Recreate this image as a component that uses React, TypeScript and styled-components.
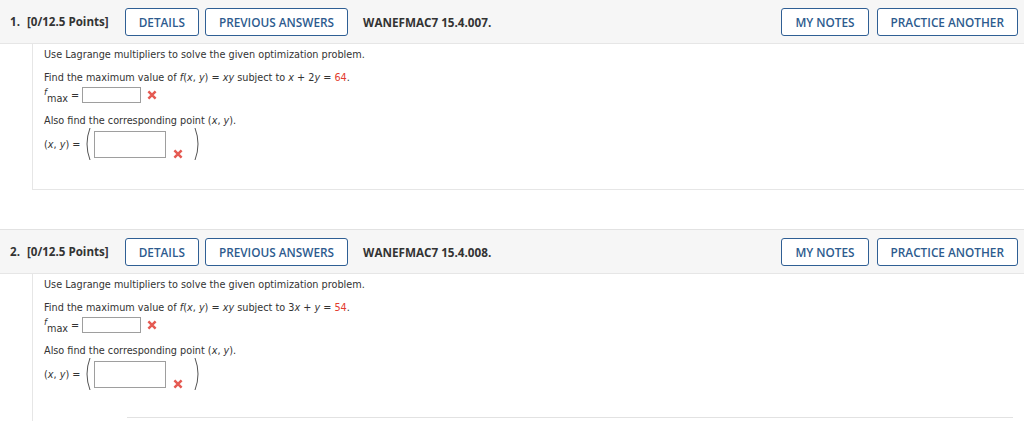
import React from 'react';
import styled, { createGlobalStyle } from 'styled-components';

const GlobalStyle = createGlobalStyle`
    html, body {
        margin: 0;
        padding: 0;
        background: #ffffff;
        overflow: hidden;
    }
`;

const Page = styled.div`
    margin-top: -1px;
    width: 1024px;
`;

const QuestionStyle = styled.section<{ $last?: boolean }>`
    margin-bottom: ${(p) => (p.$last ? '0' : '39px')};
`;

const Header = styled.header`
    display: flex;
    align-items: center;
    height: 43px;
    padding: 0 6px 0 10px;
    background: #f6f6f6;
    border-top: 1px solid #e2e2e2;
    border-bottom: 1px solid #e6e6e6;
    font-family: 'Open Sans', 'Liberation Sans', sans-serif;
`;

const Number = styled.span`
    font-size: 11.6px;
    font-weight: 700;
    color: #333;
    margin-right: 7px;
`;

const Points = styled.span`
    font-size: 11.6px;
    font-weight: 700;
    color: #333;
    margin-right: 16px;
`;

const Button = styled.button`
    height: 28px;
    padding: 0 13px;
    margin-right: 6px;
    background: #ffffff;
    border: 1.5px solid #2f5f94;
    border-radius: 3px;
    color: #2d5b8e;
    font-family: 'Open Sans', 'Liberation Sans', sans-serif;
    font-size: 11.8px;
    font-weight: 600;
    cursor: pointer;
    &:last-child {
        margin-right: 0;
    }
`;

const Code = styled.span`
    font-size: 11.7px;
    font-weight: 700;
    color: #333;
    margin-left: 9px;
`;

const Right = styled.div`
    margin-left: auto;
    display: flex;
    gap: 2px;
`;

const Body = styled.div<{ $open?: boolean }>`
    box-sizing: border-box;
    margin-left: 32px;
    height: ${(p) => (p.$open ? '150px' : '146px')};
    padding: 5px 11px 0;
    border-left: 1px solid #e6e6e6;
    border-bottom: ${(p) => (p.$open ? 'none' : '1px solid #e6e6e6')};
    font-family: 'DejaVu Sans', Verdana, sans-serif;
    font-size: 9.7px;
    color: #333;
`;

const Line = styled.p<{ $gap: number }>`
    margin: 0 0 ${(p) => p.$gap}px;
    line-height: 12px;
    white-space: nowrap;
`;

const Red = styled.span`
    color: #e33b2e;
`;

const Row = styled.div<{ $gap: number }>`
    display: flex;
    align-items: center;
    margin-bottom: ${(p) => p.$gap}px;
    white-space: nowrap;
`;

const FName = styled.span`
    font-style: italic;
    font-size: 8.5px;
    position: relative;
    top: -3px;
`;

const Sub = styled.span`
    position: relative;
    top: 3px;
    margin-right: 3px;
`;

const Input = styled.span<{ $big?: boolean }>`
    display: inline-block;
    width: ${(p) => (p.$big ? '70px' : '57px')};
    height: ${(p) => (p.$big ? '25px' : '14px')};
    border: 1px solid #9e9e9e;
    background: #ffffff;
    margin-left: ${(p) => (p.$big ? '2px' : '3px')};
`;

const Cross = styled.svg<{ $low?: boolean }>`
    margin-left: ${(p) => (p.$low ? '7px' : '6px')};
    align-self: ${(p) => (p.$low ? 'flex-end' : 'center')};
    margin-bottom: ${(p) => (p.$low ? '2px' : '0')};
`;

const Paren = styled.svg`
    margin: 0 1px 0 4px;
    &:last-child {
        margin: 0 0 0 11px;
    }
`;

const Divider = styled.div`
    margin: 26px 0 0 83px;
    border-top: 1px solid #e2e2e2;
`;

const X = ({ low }: { low?: boolean }) => (
    <Cross $low={low} width="10" height="10" viewBox="0 0 10 10">
        <path d="M1.4 1.4L8.6 8.6M8.6 1.4L1.4 8.6" stroke="#e55a52" strokeWidth="2.5" />
    </Cross>
);

const LeftParen = () => (
    <Paren width="7" height="34" viewBox="0 0 7 34">
        <path d="M6 1 Q0 17 6 33" stroke="#555" strokeWidth="1" fill="none" />
    </Paren>
);

const RightParen = () => (
    <Paren width="7" height="34" viewBox="0 0 7 34">
        <path d="M1 1 Q7 17 1 33" stroke="#555" strokeWidth="1" fill="none" />
    </Paren>
);

interface IQuestion {
    num: number;
    code: string;
    constraint: React.ReactNode;
    value: string;
}

const questions: IQuestion[] = [
    {
        num: 1,
        code: 'WANEFMAC7 15.4.007.',
        constraint: (
            <>
                <i>x</i> + 2<i>y</i>
            </>
        ),
        value: '64',
    },
    {
        num: 2,
        code: 'WANEFMAC7 15.4.008.',
        constraint: (
            <>
                3<i>x</i> + <i>y</i>
            </>
        ),
        value: '54',
    },
];

const Question: React.FC<{ q: IQuestion; last?: boolean }> = ({ q, last }) => (
    <QuestionStyle $last={last}>
        <Header>
            <Number>{q.num}.</Number>
            <Points>[0/12.5 Points]</Points>
            <Button>DETAILS</Button>
            <Button>PREVIOUS ANSWERS</Button>
            <Code>{q.code}</Code>
            <Right>
                <Button>MY NOTES</Button>
                <Button>PRACTICE ANOTHER</Button>
            </Right>
        </Header>
        <Body $open={last}>
            <Line $gap={11}>Use Lagrange multipliers to solve the given optimization problem.</Line>
            <Line $gap={3}>
                Find the maximum value of <i>f</i>(<i>x</i>, <i>y</i>) = <i>xy</i> subject to {q.constraint} ={' '}
                <Red>{q.value}</Red>.
            </Line>
            <Row $gap={12}>
                <FName>f</FName>
                <Sub>max</Sub>
                <span>=</span>
                <Input />
                <X />
            </Row>
            <Line $gap={0}>
                Also find the corresponding point (<i>x</i>, <i>y</i>).
            </Line>
            <Row $gap={0}>
                <span>
                    (<i>x</i>, <i>y</i>) =
                </span>
                <LeftParen />
                <Input $big />
                <X low />
                <RightParen />
            </Row>
            {last && <Divider />}
        </Body>
    </QuestionStyle>
);

export default function App() {
    return (
        <Page>
            <GlobalStyle />
            {questions.map((q, i) => (
                <Question key={q.num} q={q} last={i === questions.length - 1} />
            ))}
        </Page>
    );
}
